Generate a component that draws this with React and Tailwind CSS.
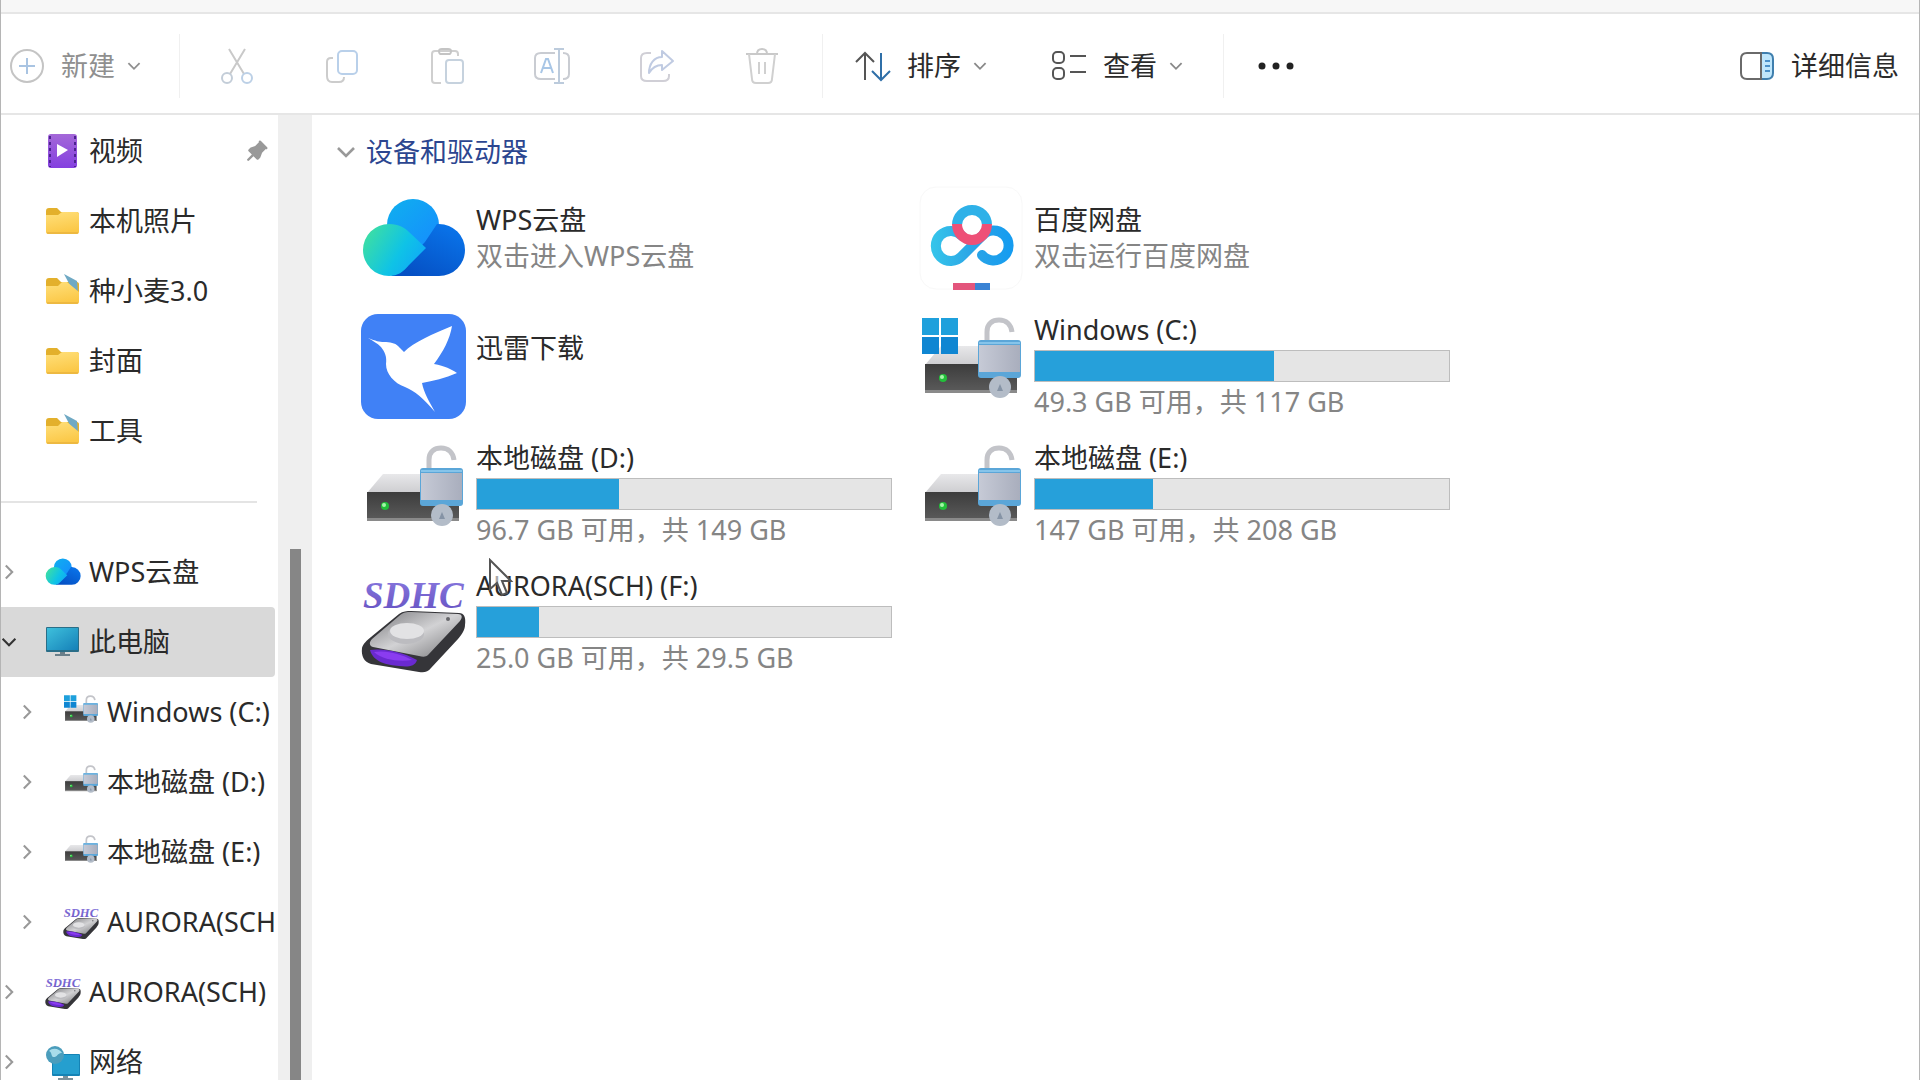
import clsx from "clsx";
import { TbPinFilled } from "react-icons/tb";

const quickAccess = [
  { name: "视频", icon: "video", pinned: true },
  { name: "本机照片", icon: "folder" },
  { name: "种小麦3.0", icon: "folderFile" },
  { name: "封面", icon: "folder" },
  { name: "工具", icon: "folderFile" },
];

const treeItems = [
  { name: "WPS云盘", icon: "cloud", level: 0 },
  { name: "此电脑", icon: "computer", level: 0, open: true },
  { name: "Windows (C:)", icon: "systemDrive", level: 1 },
  { name: "本地磁盘 (D:)", icon: "drive", level: 1 },
  { name: "本地磁盘 (E:)", icon: "drive", level: 1 },
  { name: "AURORA(SCH)", icon: "sdhc", level: 1 },
  { name: "AURORA(SCH)", icon: "sdhc", level: 0 },
  { name: "网络", icon: "network", level: 0 },
];

const devices = [
  { name: "WPS云盘", icon: "cloud", detail: "双击进入WPS云盘" },
  { name: "百度网盘", icon: "baidu", detail: "双击运行百度网盘" },
  { name: "迅雷下载", icon: "xunlei" },
  {
    name: "Windows (C:)",
    icon: "systemDrive",
    used: 57.8,
    detail: "49.3 GB 可用，共 117 GB",
  },
  {
    name: "本地磁盘 (D:)",
    icon: "drive",
    used: 34.4,
    detail: "96.7 GB 可用，共 149 GB",
  },
  {
    name: "本地磁盘 (E:)",
    icon: "drive",
    used: 28.4,
    detail: "147 GB 可用，共 208 GB",
  },
  {
    name: "AURORA(SCH) (F:)",
    icon: "sdhc",
    used: 15,
    detail: "25.0 GB 可用，共 29.5 GB",
  },
];

const Chevron = ({ className, direction }) => (
  <svg
    viewBox="0 0 20 20"
    className={className}
    fill="none"
    stroke="currentColor"
    strokeWidth="2.6"
  >
    <path d={direction === "right" ? "M6 2l8 8-8 8" : "M2 6l8 8 8-8"} />
  </svg>
);

const CloudIcon = () => (
  <svg viewBox="0 0 105 105" className="size-full">
    <defs>
      <linearGradient id="cloudTop" x1="0" y1="0" x2="1" y2="1">
        <stop offset="0" stopColor="#0fb0ee" />
        <stop offset="1" stopColor="#168bff" />
      </linearGradient>
      <linearGradient id="cloudLeft" x1="0" y1="0.2" x2="1" y2="0.7">
        <stop offset="0" stopColor="#3fe0a0" />
        <stop offset="0.6" stopColor="#0fc3e6" />
        <stop offset="1" stopColor="#10a8f8" />
      </linearGradient>
      <linearGradient id="cloudRight" x1="1" y1="0" x2="0.3" y2="1">
        <stop offset="0" stopColor="#0a78ee" />
        <stop offset="1" stopColor="#0550c4" />
      </linearGradient>
    </defs>
    <circle cx="52" cy="39" r="26" fill="url(#cloudTop)" />
    <path
      d="M78 38a26 26 0 0 1 0 52H30L64 56C68 50 72 44 76 38z"
      fill="url(#cloudRight)"
    />
    <path
      d="M28 38C38 38 44 42 48 46L65 62L48 79C42 86 37 90 28 90A26 26 0 0 1 28 38z"
      fill="url(#cloudLeft)"
    />
  </svg>
);

const BaiduIcon = () => (
  <svg viewBox="0 0 105 105" className="size-full" fill="none">
    <defs>
      <linearGradient id="baiduLoop" x1="14" y1="0" x2="92" y2="0" gradientUnits="userSpaceOnUse">
        <stop offset="0" stopColor="#35c4ea" />
        <stop offset="0.5" stopColor="#2ba5e6" />
        <stop offset="1" stopColor="#159cf0" />
      </linearGradient>
    </defs>
    <rect x="1" y="1" width="102" height="102" rx="16" fill="#fff" stroke="#f8f8f8" />
    <g strokeWidth="10">
      <path
        d="M43 50A15 15 0 1 0 43 70L63 50A15 15 0 1 1 63 69"
        stroke="url(#baiduLoop)"
        strokeLinecap="round"
      />
      <path d="M38 39a15 15 0 0 1 30 0" stroke="#2eb1e8" />
      <path d="M38 38a15 16 0 0 0 30 0" stroke="#ee5077" />
    </g>
    <path d="M34 97h22v7H34z" fill="#e3557c" />
    <path d="M56 97h15v7H56z" fill="#3a83d4" />
  </svg>
);

const XunleiIcon = () => (
  <svg viewBox="0 0 105 105" className="size-full">
    <rect width="105" height="105" rx="17" fill="#4081f6" />
    <path
      d="M7 24C15 27 18 28 23 28C29 28 34 29 37 32L43 38C53 28 72 20 91 12C89 25 82 38 73 50C84 52 90 55 96 59C84 64 72 67 61 69C63 79 68 87 74 98C62 84 54 77 44 73C33 69 25 60 25 50C26 43 24 38 20 33C16 29 12 27 7 24z"
      fill="#fff"
    />
  </svg>
);

const DriveIcon = ({ system }) => (
  <svg viewBox="0 0 105 105" className="size-full">
    <defs>
      <linearGradient id="driveTop" x1="0" y1="0" x2="0" y2="1">
        <stop offset="0" stopColor="#e8e8ea" />
        <stop offset="1" stopColor="#cdcdd0" />
      </linearGradient>
      <linearGradient id="driveFront" x1="0" y1="0" x2="0" y2="1">
        <stop offset="0" stopColor="#3c3c3c" />
        <stop offset="1" stopColor="#5c5c5c" />
      </linearGradient>
      <linearGradient id="lockBody" x1="0" y1="0" x2="1" y2="0">
        <stop offset="0" stopColor="#c6cad6" />
        <stop offset="1" stopColor="#a9aebd" />
      </linearGradient>
    </defs>
    <path d="M6 51L22 32H84L98 51z" fill="url(#driveTop)" />
    <path d="M6 50H98V79H6z" fill="url(#driveFront)" />
    <path d="M6 76H98V79H6z" fill="#8a8a8a" />
    <circle cx="24" cy="64" r="4" fill="#22c03a" />
    <circle cx="23" cy="63" r="2" fill="#a5f5a8" />
    {system && (
      <>
        <path d="M3 4H20V21H3zM22 4H39V21H22z" fill="#1ea0dc" />
        <path d="M3 23H20V40H3zM22 23H39V40H22z" fill="#0f86d2" />
      </>
    )}
    <path
      d="M68 27V18C68 9 74 6 80 6C87 6 92 10 93 18"
      fill="none"
      stroke="#c3c4c9"
      strokeWidth="5"
    />
    <rect x="59" y="26" width="43" height="38" rx="3" fill="#5ba6d8" />
    <path d="M60 31H101V58H60z" fill="url(#lockBody)" />
    <path d="M60 29H101" stroke="#86c4ea" strokeWidth="2" />
    <circle cx="81" cy="73" r="11" fill="#b3bcc8" />
    <path d="M81 70l3 7h-6z" fill="#8593a5" />
  </svg>
);

const SdhcIcon = () => (
  <svg viewBox="0 0 105 105" className="size-full">
    <defs>
      <linearGradient id="sdhcTop" x1="0" y1="0" x2="1" y2="1">
        <stop offset="0" stopColor="#77777b" />
        <stop offset="0.5" stopColor="#d2d2d4" />
        <stop offset="1" stopColor="#77777a" />
      </linearGradient>
      <linearGradient id="sdhcLabel" x1="0" y1="0" x2="0" y2="1">
        <stop offset="0" stopColor="#8a7ae0" />
        <stop offset="1" stopColor="#6450c0" />
      </linearGradient>
    </defs>
    <text
      x="2"
      y="38"
      fontFamily="Liberation Serif, serif"
      fontSize="37"
      fontWeight="bold"
      fontStyle="italic"
      fill="url(#sdhcLabel)"
    >
      SDHC
    </text>
    <path
      d="M1 78C2 74 6 70 10 67L38 44C42 41 46 41 50 41L98 43C103 43 105 47 104 55C104 60 101 64 97 69L70 98C67 102 63 103 58 102L10 94C3 92 0 86 1 78z"
      fill="#353539"
    />
    <path
      d="M38 46C42 42 46 42 50 42L97 44C101 44 102 47 99 51L67 85C65 87 62 87 58 86L12 77C8 76 8 72 11 69z"
      fill="url(#sdhcTop)"
    />
    <ellipse cx="45" cy="64" rx="18" ry="10" fill="#bcbcc0" />
    <ellipse cx="46" cy="61" rx="17" ry="8" fill="#e2e2e4" />
    <circle cx="87" cy="49" r="2" fill="#66666a" />
    <path
      d="M9 80C22 78 42 82 56 90C54 97 46 97 38 96C26 95 12 92 9 80z"
      fill="#6a2ad0"
    />
    <path d="M13 82C26 80 40 84 51 90C38 92 22 90 13 82z" fill="#8a3cf0" />
  </svg>
);

const VideoIcon = () => (
  <svg viewBox="0 0 36 36" className="size-full">
    <defs>
      <linearGradient id="videoBg" x1="0" y1="0" x2="0" y2="1">
        <stop offset="0" stopColor="#a468d8" />
        <stop offset="1" stopColor="#8440e0" />
      </linearGradient>
    </defs>
    <rect x="3" y="1" width="29" height="34" rx="3" fill="url(#videoBg)" />
    <path
      d="M5 3V34M30 3V34"
      stroke="#4c2290"
      strokeWidth="2"
      strokeDasharray="3 3"
    />
    <path d="M12 11L23 17L12 24z" fill="#fff" />
  </svg>
);

const FolderIcon = ({ file }) => (
  <svg viewBox="0 0 36 36" className="size-full">
    <defs>
      <linearGradient id="folderFront" x1="0" y1="0" x2="0.3" y2="1">
        <stop offset="0" stopColor="#ffe07c" />
        <stop offset="1" stopColor="#fbc847" />
      </linearGradient>
    </defs>
    <path d="M1 8C1 6 2 5 4 5H12L16 9H32C33 9 34 10 34 11V28H1z" fill="#e3b02c" />
    {file && <path d="M19 1L32 8L33 20L28 18z" fill="#6fa9c4" />}
    <path
      d={
        file
          ? "M1 13H13L17 9H22L34 19V29C34 30 33 31 32 31H3C2 31 1 30 1 29z"
          : "M1 12H13L17 9H32C33 9 34 10 34 11V29C34 30 33 31 32 31H3C2 31 1 30 1 29z"
      }
      fill="url(#folderFront)"
    />
    <path d="M2 30H33" stroke="#e0a93a" />
  </svg>
);

const ComputerIcon = () => (
  <svg viewBox="0 0 36 36" className="size-full">
    <defs>
      <linearGradient id="screen" x1="0" y1="0" x2="1" y2="1">
        <stop offset="0" stopColor="#3ec0dc" />
        <stop offset="1" stopColor="#1580b8" />
      </linearGradient>
    </defs>
    <rect x="1" y="3" width="33" height="25" rx="1" fill="#2a6e88" />
    <rect x="2" y="4" width="31" height="22" fill="url(#screen)" />
    <path d="M15 28H20V30H25V32H10V30H15z" fill="#6a7f8a" />
  </svg>
);

const NetworkIcon = () => (
  <svg viewBox="0 0 36 36" className="size-full">
    <rect x="7" y="10" width="28" height="22" rx="1" fill="#1583b5" />
    <rect x="8" y="11" width="26" height="19" fill="#259fcf" />
    <path d="M18 32h5v2h5v2H13v-2h5z" fill="#7d929c" />
    <circle cx="10" cy="11" r="9" fill="#4b9dbc" />
    <path
      d="M4 7C8 3 15 5 17 9C13 8 12 14 8 13C6 12 7 8 4 7z"
      fill="#a9dcea"
    />
  </svg>
);

const ItemIcon = ({ name }) => {
  switch (name) {
    case "video":
      return <VideoIcon />;
    case "folder":
      return <FolderIcon />;
    case "folderFile":
      return <FolderIcon file />;
    case "cloud":
      return <CloudIcon />;
    case "computer":
      return <ComputerIcon />;
    case "systemDrive":
      return <DriveIcon system />;
    case "sdhc":
      return <SdhcIcon />;
    case "network":
      return <NetworkIcon />;
    case "baidu":
      return <BaiduIcon />;
    case "xunlei":
      return <XunleiIcon />;
    default:
      return <DriveIcon />;
  }
};

// Greyed out commands, nothing is selected
const fileCommands = [
  {
    label: "剪切",
    icon: (
      <>
        <path d="M10 1L25 26M26 1L11 26" stroke="#c9c9c9" />
        <circle cx="8" cy="30" r="5" stroke="#c3cdd8" />
        <circle cx="28" cy="30" r="5" stroke="#bcd0e6" />
      </>
    ),
  },
  {
    label: "复制",
    icon: (
      <>
        <path d="M9 10H7C4 10 3 12 3 14V28C3 32 5 34 8 34H15C18 34 20 32 20 29" stroke="#cccccc" />
        <rect x="14" y="3" width="19" height="23" rx="4" stroke="#b9d0ea" />
      </>
    ),
  },
  {
    label: "粘贴",
    icon: (
      <>
        <path d="M12 35H6C4 35 3 34 3 32V6C3 4 4 3 6 3H26C28 3 29 4 29 6V8" stroke="#cfcfcf" />
        <path d="M10 3C10 6 11 6 13 6H19C21 6 22 6 22 3C22 1 21 1 19 1H13C11 1 10 1 10 3z" stroke="#c4c4c4" />
        <rect x="17" y="12" width="17" height="23" rx="3" stroke="#c6d2de" />
      </>
    ),
  },
  {
    label: "重命名",
    icon: (
      <>
        <path d="M21 5H7C3 5 1 7 1 10V26C1 29 3 31 7 31H21M29 5C33 5 35 7 35 10V26C35 29 33 31 29 31" stroke="#c9ccd2" />
        <path d="M7 25L12 11H14L19 25M9 20H17" stroke="#a8c6e6" />
        <path d="M25 1V35M20 1H30M20 35H30" stroke="#bccbdc" />
      </>
    ),
  },
  {
    label: "共享",
    icon: (
      <>
        <path d="M12 5H8C4 5 2 7 2 10V28C2 31 4 33 8 33H24C28 33 30 31 30 28V26" stroke="#d0cfd6" />
        <path d="M23 3L34 13L23 22V17C17 17 13 20 10 25C10 16 15 9 23 9z" stroke="#c0cbe2" strokeLinejoin="round" />
      </>
    ),
  },
  {
    label: "删除",
    icon: (
      <>
        <path d="M2 6H34M13 6C13 2 15 1 18 1C21 1 23 2 23 6" stroke="#c9c9c9" />
        <path d="M5 6L8 31C8 34 10 35 12 35H24C26 35 28 34 28 31L31 6M15 14V26M21 14V26" stroke="#d0d0d0" />
      </>
    ),
  },
];

const Separator = () => <div className="h-16 w-px shrink-0 bg-[#f0f0f0]" />;

const Toolbar = () => (
  <div className="flex h-[101px] shrink-0 items-center border-b-2 border-[#e6e6e6] bg-white pt-1 text-[#2b2b2b]">
    <button
      type="button"
      disabled
      className="flex w-[178px] shrink-0 items-center pl-2 text-[#8f8f8f]"
    >
      <svg viewBox="0 0 36 36" className="size-9" fill="none" strokeWidth="2">
        <circle cx="18" cy="18" r="16" stroke="#c4c4c4" />
        <path d="M18 10V26M10 18H26" stroke="#a9c4e2" />
      </svg>
      <span className="ml-4">新建</span>
      <Chevron className="ml-3 size-3.5" />
    </button>
    <Separator />
    <div className="mr-2 ml-1 flex">
      {fileCommands.map((command) => (
        <button
          key={command.label}
          type="button"
          disabled
          aria-label={command.label}
          className="flex w-[105px] items-center justify-center"
        >
          <svg viewBox="0 0 36 36" className="size-9" fill="none" strokeWidth="2">
            {command.icon}
          </svg>
        </button>
      ))}
    </div>
    <Separator />
    <button type="button" className="ml-8 flex shrink-0 items-center">
      <svg viewBox="0 0 36 36" className="size-9" fill="none" strokeWidth="2">
        <path d="M10 32V5M1 14L10 5L19 14" stroke="#555" />
        <path d="M26 5V32M17 23L26 32L35 23" stroke="#2f6fa8" />
      </svg>
      <span className="ml-4">排序</span>
      <Chevron className="ml-3 size-3.5 text-[#888]" />
    </button>
    <button type="button" className="ml-16 flex shrink-0 items-center">
      <svg viewBox="0 0 36 36" className="size-9" fill="none" stroke="#555" strokeWidth="2">
        <rect x="2" y="4" width="11" height="11" rx="4" />
        <rect x="2" y="20" width="11" height="11" rx="4" />
        <path d="M19 8H35M19 24H35" />
      </svg>
      <span className="ml-4">查看</span>
      <Chevron className="mr-10 ml-3 size-3.5 text-[#888]" />
    </button>
    <Separator />
    <button type="button" aria-label="更多" className="ml-8 shrink-0">
      <svg viewBox="0 0 40 36" className="h-9 w-10" fill="#222">
        <circle cx="6" cy="18" r="3.5" />
        <circle cx="20" cy="18" r="3.5" />
        <circle cx="34" cy="18" r="3.5" />
      </svg>
    </button>
    <button type="button" className="mr-5 ml-auto flex shrink-0 items-center">
      <svg viewBox="0 0 36 36" className="size-9" fill="none" strokeWidth="2">
        <path d="M22 5H28C32 5 34 7 34 11V25C34 29 32 31 28 31H22z" fill="#bfe6fb" stroke="#3f7fae" />
        <path d="M22 5H8C4 5 2 7 2 11V25C2 29 4 31 8 31H22z" stroke="#6a6a6a" />
        <path d="M26 13H31M26 18H31M26 23H31" stroke="#4a90c8" />
      </svg>
      <span className="ml-4">详细信息</span>
    </button>
  </div>
);

const TreeRow = ({ item }) => (
  <button
    type="button"
    className={clsx(
      "flex h-[70px] w-full items-center overflow-hidden rounded-r text-left whitespace-nowrap",
      item.open && "bg-[#d9d9d9]",
      item.level === 1 && "pl-[18px]",
    )}
  >
    <span className="w-4 shrink-0">
      {item.level !== undefined && (
        <Chevron
          direction={item.open ? "down" : "right"}
          className={clsx("size-4", item.open ? "text-[#333]" : "text-[#999]")}
        />
      )}
    </span>
    <span className="ml-7 size-9 shrink-0">
      <ItemIcon name={item.icon} />
    </span>
    <span className="ml-2">{item.name}</span>
    {item.pinned && <TbPinFilled className="mr-1 ml-auto size-7 text-[#999]" />}
  </button>
);

const Sidebar = () => (
  <div className="flex shrink-0">
    <nav className="w-[274px] overflow-hidden pt-px">
      {quickAccess.map((item) => (
        <TreeRow key={item.name} item={item} />
      ))}
      <div className="flex h-[71px] items-center pr-[18px]">
        <hr className="w-full border-t-2 border-[#e4e4e4]" />
      </div>
      {treeItems.map((item, index) => (
        <TreeRow key={index} item={item} />
      ))}
    </nav>
    <div className="ml-[3px] flex w-[34px] justify-center bg-[#efefef] pt-[434px]">
      <div className="w-[11px] bg-[#868686]" />
    </div>
  </div>
);

const DeviceTile = ({ device }) => (
  <li className="flex h-32 items-center">
    <div className="size-[105px] shrink-0">
      <ItemIcon name={device.icon} />
    </div>
    <div className="ml-[10px] min-h-[72px] w-[416px] leading-9">
      <div>{device.name}</div>
      {device.used !== undefined && (
        <div
          role="progressbar"
          aria-label={device.name}
          aria-valuenow={device.used}
          className="my-[2px] h-8 border border-[#bdbdbd] bg-[#e5e5e5]"
        >
          <div className="h-full bg-[#26a0da]" style={{ width: device.used + "%" }} />
        </div>
      )}
      {device.detail && <div className="text-[#858585]">{device.detail}</div>}
    </div>
  </li>
);

const MousePointer = () => (
  <svg
    viewBox="0 0 26 40"
    className="pointer-events-none absolute top-[558px] left-[487px] h-10 w-[26px]"
  >
    <path
      d="M2 2V31L9 25L14 37L19 35L14 23H23z"
      fill="#fff"
      fillOpacity="0.6"
      stroke="#555"
      strokeWidth="2"
    />
  </svg>
);

const App = () => {
  return (
    <div
      lang="zh-CN"
      className="relative flex h-screen flex-col overflow-hidden border-x border-[#b5b5b5] bg-white font-['Noto_Sans','Noto_Sans_CJK_SC',sans-serif] text-[27px] leading-9 text-[#2a2a2a]"
    >
      <div className="h-[14px] shrink-0 border-b-2 border-[#e6e6e6] bg-[#f7f7f7]" />
      <Toolbar />
      <div className="flex min-h-0 flex-1">
        <Sidebar />
        <main className="min-w-0 flex-1 overflow-hidden pt-[19px] pl-6">
          <button type="button" className="flex items-center text-[#2c4690]">
            <Chevron className="size-5 text-[#999]" />
            <h2 className="ml-[10px]">设备和驱动器</h2>
          </button>
          <ul className="mt-1 ml-[25px] grid grid-cols-[repeat(auto-fill,558px)]">
            {devices.map((device) => (
              <DeviceTile key={device.name} device={device} />
            ))}
          </ul>
        </main>
      </div>
      <MousePointer />
    </div>
  );
};

export default App;
